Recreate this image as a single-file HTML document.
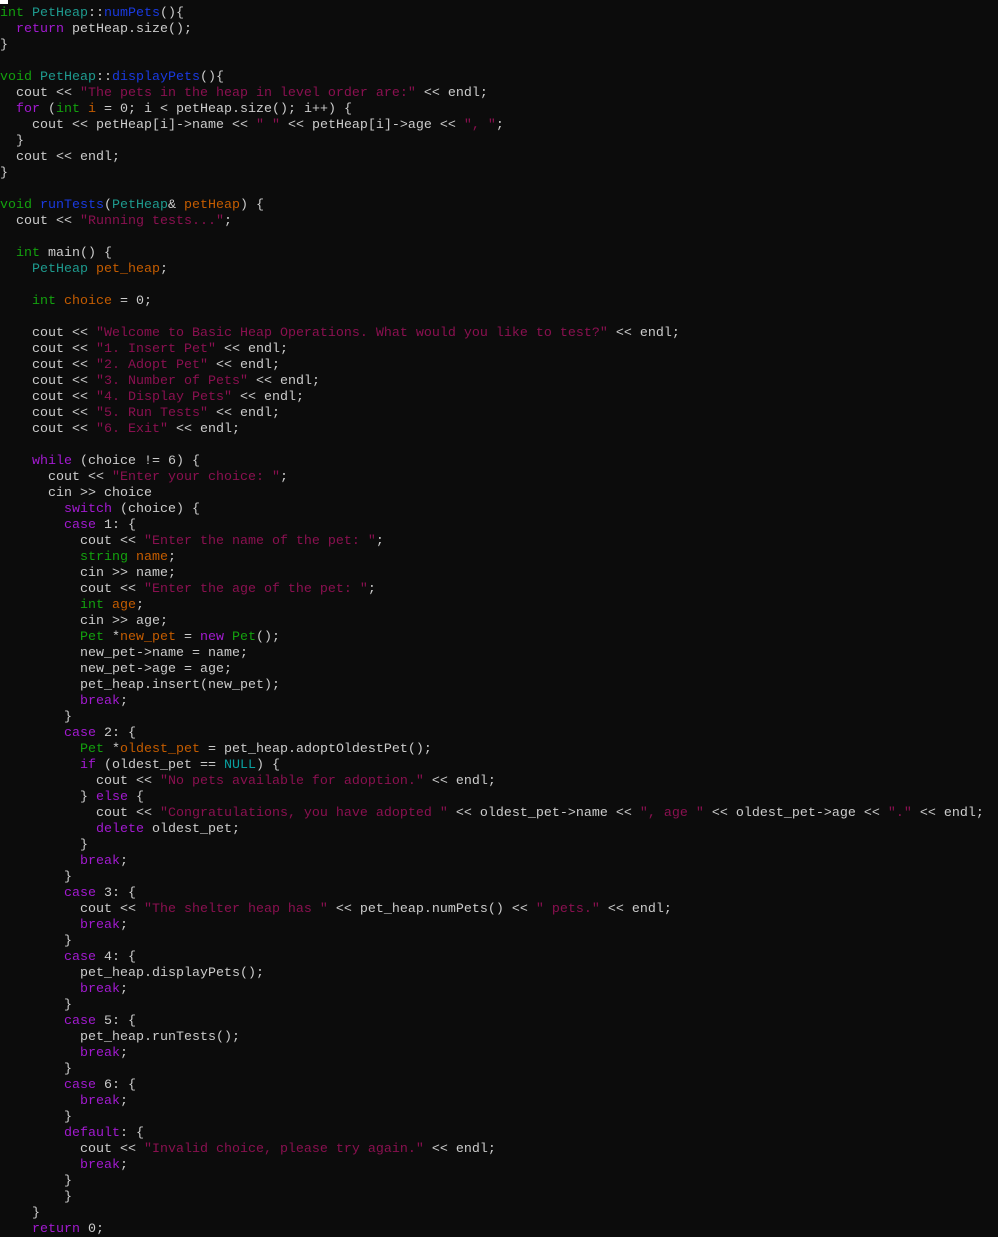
<!DOCTYPE html>
<html><head><meta charset="utf-8"><style>
html,body{margin:0;padding:0;background:#0c0c0c;width:998px;height:1237px;overflow:hidden}
pre{margin:0;padding:6px 0 0 0;font-family:"Liberation Mono",monospace;font-size:13.33px;line-height:16px;color:#cccccc;white-space:pre}
.k{color:#a21ad0}.t{color:#13a10e}.c{color:#1e9a8e}.f{color:#1a3ae0}.s{color:#8a1050}.v{color:#c45c00}.n{color:#0aa0a0}
#cur{position:absolute;left:0;top:0;width:8px;height:4px;background:#fff}
</style></head><body><div id="cur"></div><pre><span class="t">int</span> <span class="c">PetHeap</span>::<span class="f">numPets</span>(){
  <span class="k">return</span> petHeap.size();
}

<span class="t">void</span> <span class="c">PetHeap</span>::<span class="f">displayPets</span>(){
  cout &lt;&lt; <span class="s">"The pets in the heap in level order are:"</span> &lt;&lt; endl;
  <span class="k">for</span> (<span class="t">int</span> <span class="v">i</span> = 0; i &lt; petHeap.size(); i++) {
    cout &lt;&lt; petHeap[i]-&gt;name &lt;&lt; <span class="s">" "</span> &lt;&lt; petHeap[i]-&gt;age &lt;&lt; <span class="s">", "</span>;
  }
  cout &lt;&lt; endl;
}

<span class="t">void</span> <span class="f">runTests</span>(<span class="c">PetHeap</span>&amp; <span class="v">petHeap</span>) {
  cout &lt;&lt; <span class="s">"Running tests..."</span>;

  <span class="t">int</span> main() {
    <span class="c">PetHeap</span> <span class="v">pet_heap</span>;

    <span class="t">int</span> <span class="v">choice</span> = 0;

    cout &lt;&lt; <span class="s">"Welcome to Basic Heap Operations. What would you like to test?"</span> &lt;&lt; endl;
    cout &lt;&lt; <span class="s">"1. Insert Pet"</span> &lt;&lt; endl;
    cout &lt;&lt; <span class="s">"2. Adopt Pet"</span> &lt;&lt; endl;
    cout &lt;&lt; <span class="s">"3. Number of Pets"</span> &lt;&lt; endl;
    cout &lt;&lt; <span class="s">"4. Display Pets"</span> &lt;&lt; endl;
    cout &lt;&lt; <span class="s">"5. Run Tests"</span> &lt;&lt; endl;
    cout &lt;&lt; <span class="s">"6. Exit"</span> &lt;&lt; endl;

    <span class="k">while</span> (choice != 6) {
      cout &lt;&lt; <span class="s">"Enter your choice: "</span>;
      cin &gt;&gt; choice
        <span class="k">switch</span> (choice) {
        <span class="k">case</span> 1: {
          cout &lt;&lt; <span class="s">"Enter the name of the pet: "</span>;
          <span class="t">string</span> <span class="v">name</span>;
          cin &gt;&gt; name;
          cout &lt;&lt; <span class="s">"Enter the age of the pet: "</span>;
          <span class="t">int</span> <span class="v">age</span>;
          cin &gt;&gt; age;
          <span class="t">Pet</span> *<span class="v">new_pet</span> = <span class="k">new</span> <span class="t">Pet</span>();
          new_pet-&gt;name = name;
          new_pet-&gt;age = age;
          pet_heap.insert(new_pet);
          <span class="k">break</span>;
        }
        <span class="k">case</span> 2: {
          <span class="t">Pet</span> *<span class="v">oldest_pet</span> = pet_heap.adoptOldestPet();
          <span class="k">if</span> (oldest_pet == <span class="n">NULL</span>) {
            cout &lt;&lt; <span class="s">"No pets available for adoption."</span> &lt;&lt; endl;
          } <span class="k">else</span> {
            cout &lt;&lt; <span class="s">"Congratulations, you have adopted "</span> &lt;&lt; oldest_pet-&gt;name &lt;&lt; <span class="s">", age "</span> &lt;&lt; oldest_pet-&gt;age &lt;&lt; <span class="s">"."</span> &lt;&lt; endl;
            <span class="k">delete</span> oldest_pet;
          }
          <span class="k">break</span>;
        }
        <span class="k">case</span> 3: {
          cout &lt;&lt; <span class="s">"The shelter heap has "</span> &lt;&lt; pet_heap.numPets() &lt;&lt; <span class="s">" pets."</span> &lt;&lt; endl;
          <span class="k">break</span>;
        }
        <span class="k">case</span> 4: {
          pet_heap.displayPets();
          <span class="k">break</span>;
        }
        <span class="k">case</span> 5: {
          pet_heap.runTests();
          <span class="k">break</span>;
        }
        <span class="k">case</span> 6: {
          <span class="k">break</span>;
        }
        <span class="k">default</span>: {
          cout &lt;&lt; <span class="s">"Invalid choice, please try again."</span> &lt;&lt; endl;
          <span class="k">break</span>;
        }
        }
    }
    <span class="k">return</span> 0;
</pre></body></html>
